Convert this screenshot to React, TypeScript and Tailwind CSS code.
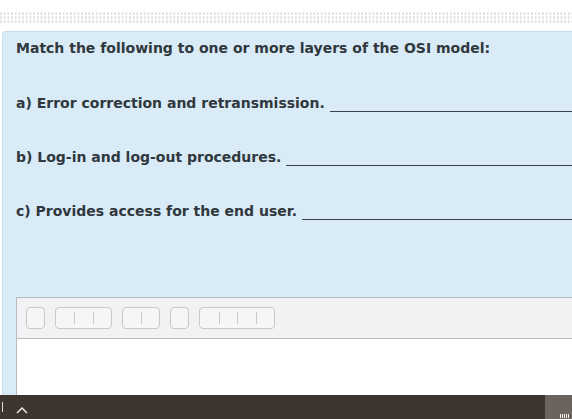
import React from 'react';

const font = { fontFamily: '"DejaVu Sans", Verdana, sans-serif' };

function Blank({ label }: { label: string }) {
  return (
    <div className="flex items-end h-[22px]">
      <span className="whitespace-nowrap">{label}</span>
      <span className="flex-1 ml-[5px] mb-[2px] border-b border-[#3a4148]" />
    </div>
  );
}

function ToolBtn({ segments }: { segments: number }) {
  return (
    <div
      className="flex h-[22px] rounded-[4px] border border-[#c9c9cc] bg-[#f6f6f7]"
      style={{ width: segments * 19 }}
    >
      {Array.from({ length: segments }).map((_, i) => (
        <div key={i} className="flex-1 flex items-center">
          {i > 0 && <span className="w-px h-[12px] bg-[#c9c9cc]" />}
        </div>
      ))}
    </div>
  );
}

export default function App() {
  return (
    <div className="w-[572px] h-[419px] overflow-hidden bg-white flex flex-col" style={font}>
      {/* dotted header strip */}
      <div className="h-[31px] flex flex-col justify-center gap-[1px] pt-[4px]">
        {[0, 1, 2].map((r) => (
          <div
            key={r}
            className="h-[3px] w-full"
            style={{
              backgroundImage: 'linear-gradient(90deg, #e2e2e5 2px, transparent 2px)',
              backgroundSize: '3.7px 3px',
            }}
          />
        ))}
      </div>

      {/* question panel */}
      <div className="flex-1 ml-[2px] rounded-tl-[4px] border-l border-t border-[#c7dde9] bg-[#d9ebf6] flex flex-col overflow-hidden">
        <div className="pl-[13px] pt-[5px] text-[14px] font-bold text-[#30383e]">
          <div className="h-[22px] flex items-end">Match the following to one or more layers of the OSI model:</div>
          <div className="mt-[33px] flex flex-col gap-[32px]">
            <Blank label="a) Error correction and retransmission." />
            <Blank label="b) Log-in and log-out procedures." />
            <Blank label="c) Provides access for the end user." />
          </div>
        </div>

        {/* editor */}
        <div className="mt-auto ml-[13px] border-l border-t border-[#b4bcc0] flex flex-col h-[98px]">
          <div className="h-[41px] bg-[#f2f1f3] border-b border-[#b9b9bb] flex items-center gap-[10px] pl-[9px]">
            <ToolBtn segments={1} />
            <ToolBtn segments={3} />
            <ToolBtn segments={2} />
            <ToolBtn segments={1} />
            <ToolBtn segments={4} />
          </div>
          <div className="flex-1 bg-white" />
        </div>
      </div>

      {/* taskbar */}
      <div className="h-[24px] bg-[#3e362e] flex items-center text-[#e6e6e6]">
        <span className="w-[3px] h-[10px] border-r border-[#ddd] ml-0" />
        <svg width="14" height="10" viewBox="0 0 14 10" className="ml-[12px] mt-[6px]">
          <path d="M2 8 L7 3 L12 8" fill="none" stroke="#e8e8e8" strokeWidth="1.5" />
        </svg>
        <div className="flex-1" />
        <div className="w-[27px] h-full bg-[#6a645d] flex items-end justify-end pr-[2px] pb-[1px]">
          <span className="w-[10px] h-[4px]" style={{ backgroundImage: 'linear-gradient(90deg, #eee 1px, transparent 1px)', backgroundSize: '2px 4px' }} />
        </div>
      </div>
    </div>
  );
}
